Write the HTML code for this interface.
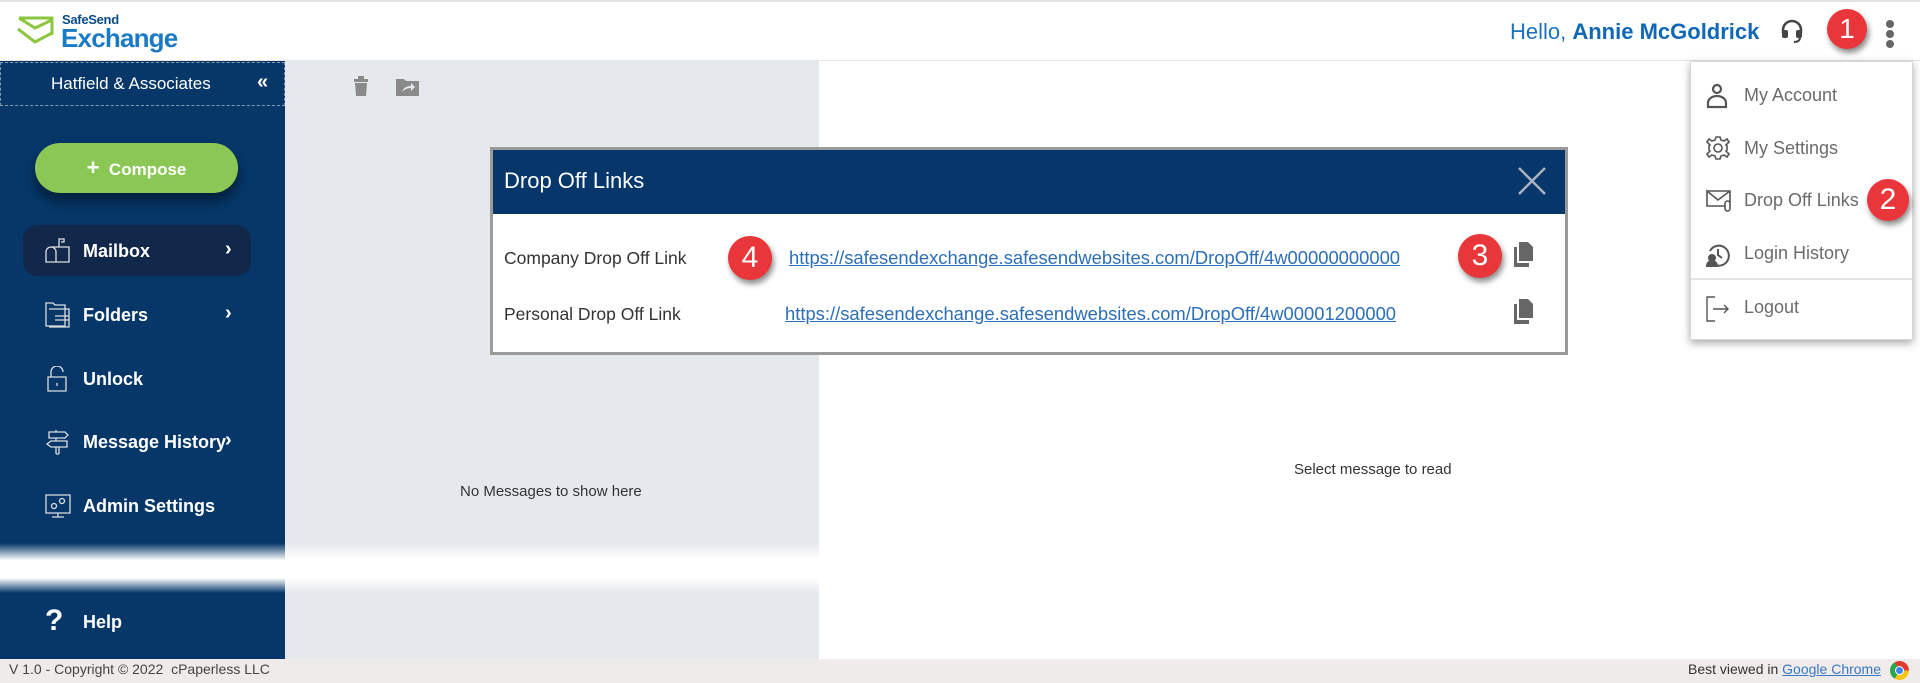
<!DOCTYPE html>
<html><head><meta charset="utf-8"><style>
*{box-sizing:border-box;margin:0;padding:0}
body{width:1920px;height:683px;position:relative;overflow:hidden;background:#fff;font-family:"Liberation Sans",sans-serif}
.a{position:absolute}
.side{left:0;top:61px;width:285px;height:598px;background:#063768}
.nav{position:absolute;left:83px;color:#fff;font-size:18px;font-weight:bold;line-height:22px}
.ic{position:absolute;left:45px}
.chev{position:absolute;left:225px;color:#fff;font-size:20px;font-weight:bold;line-height:20px}
.badge{position:absolute;width:44px;height:44px;border-radius:50%;background:#e8363b;color:#fff;font-size:30px;text-align:center;line-height:44px;box-shadow:2px 4px 6px rgba(0,0,0,.45)}
.dd{position:absolute;left:53px;color:#6b6b6b;font-size:18px}
.ddi{position:absolute;left:15px}
</style></head><body>
<div class="a" style="left:0;top:0;width:1920px;height:2px;background:#e3e3e3"></div>
<svg class="a" style="left:16px;top:15px" width="40" height="30" viewBox="0 0 40 30"><path d="M3 3 L36 3 L36 20 M3 3 L19 13 L36 5 M2 14 L19 27 L36 18" fill="none" stroke="#8cc63f" stroke-width="3"/></svg>
<div class="a" style="left:62px;top:12px;color:#0a4b86;font-size:13px;font-weight:bold;letter-spacing:-.3px">SafeSend</div>
<div class="a" style="left:61px;top:24px;color:#1a7ac4;font-size:26px;font-weight:bold;letter-spacing:-.8px;line-height:28px">Exchange</div>
<div class="a" style="left:0;top:60px;width:1920px;height:1px;background:#e6e6e6"></div>
<div class="a" style="left:1510px;top:19px;font-size:22px;color:#1a73c0">Hello, <b style="color:#0f67b5">Annie McGoldrick</b></div>
<svg class="a" style="left:1779px;top:19px" width="26" height="26" viewBox="0 0 26 26"><path d="M4 14 V11 a9 9 0 0 1 18 0 V14" fill="none" stroke="#444" stroke-width="2.5"/><rect x="3" y="11" width="6" height="8" rx="2" fill="#444"/><rect x="17" y="11" width="6" height="8" rx="2" fill="#444"/><path d="M21 18 q0 5 -6 5" fill="none" stroke="#444" stroke-width="2"/></svg>
<div class="badge" style="left:1827px;top:9px;width:40px;height:40px;line-height:40px;font-size:28px">1</div>
<div class="a" style="left:1886px;top:20px;width:8px;height:8px;border-radius:50%;background:#666"></div>
<div class="a" style="left:1886px;top:30px;width:8px;height:8px;border-radius:50%;background:#666"></div>
<div class="a" style="left:1886px;top:40px;width:8px;height:8px;border-radius:50%;background:#666"></div>
<div class="a side"></div>
<div class="a" style="left:0;top:62px;width:285px;height:44px;border:1px dashed #8899aa;color:#fff;font-size:17px;line-height:42px;padding-left:50px">Hatfield &amp; Associates<span style="position:absolute;left:256px;font-weight:bold;font-size:20px;top:-2px">«</span></div>
<div class="a" style="left:35px;top:143px;width:203px;height:50px;border-radius:25px;background:#8bc755;color:#fff;font-size:17px;font-weight:bold;text-align:center;line-height:50px;box-shadow:0 8px 12px rgba(0,0,0,.45)"><span style="font-size:22px">+</span>&nbsp; Compose</div>
<div class="a" style="left:23px;top:225px;width:228px;height:51px;border-radius:14px;background:#12284a"></div>
<svg class="ic" style="top:238px" width="26" height="26" viewBox="0 0 26 26" fill="none" stroke="#ddd" stroke-width="1.3"><path d="M1 24 V14 a5 5 0 0 1 10 0 V24 Z M6 9 H24 V24 H11 M14 9 V1 H19 V4 H16"/></svg>
<div class="nav" style="top:240px">Mailbox</div><div class="chev" style="top:239px">›</div>
<svg class="ic" style="top:302px" width="26" height="26" viewBox="0 0 26 26" fill="none" stroke="#ddd" stroke-width="1.3"><path d="M1 1 H8 L10 3 H20 V24 H1 Z M4 7 H24 V25 H4 M10 14 H24 M10 18 H24"/></svg>
<div class="nav" style="top:304px">Folders</div><div class="chev" style="top:303px">›</div>
<svg class="ic" style="top:366px" width="24" height="26" viewBox="0 0 24 26" fill="none" stroke="#ddd" stroke-width="1.3"><path d="M6 11 V6 a6 6 0 0 1 12 0 M3 11 H21 V25 H3 Z M12 17 V20"/></svg>
<div class="nav" style="top:368px">Unlock</div>
<svg class="ic" style="top:429px" width="26" height="26" viewBox="0 0 26 26" fill="none" stroke="#ddd" stroke-width="1.3"><path d="M4 3 H20 L23 6 L20 9 H4 Z M22 12 H6 L2 15 L6 18 H22 Z M11 1 V3 M11 9 V12 M11 18 V25 M14 18 V25 M11 25 H14"/></svg>
<div class="nav" style="top:431px">Message History</div><div class="chev" style="top:430px">›</div>
<svg class="ic" style="top:493px" width="26" height="26" viewBox="0 0 26 26" fill="none" stroke="#ddd" stroke-width="1.3"><path d="M1 2 H25 V20 H1 Z M13 20 V24 M7 24 H19"/><circle cx="9" cy="13" r="2.5"/><circle cx="17" cy="8" r="2.5"/></svg>
<div class="nav" style="top:495px">Admin Settings</div>
<div class="a" style="left:0;top:543px;width:819px;height:50px;background:linear-gradient(#063768 0%,#fff 35%,#fff 70%,#063768 100%)"></div>
<div class="a" style="left:285px;top:543px;width:534px;height:50px;background:linear-gradient(#e5e9ed 0%,#fff 35%,#fff 70%,#e5e9ed 100%)"></div>
<div class="a" style="left:45px;top:604px;color:#fff;font-size:30px;font-weight:bold">?</div>
<div class="nav" style="top:611px">Help</div>
<div class="a" style="left:285px;top:61px;width:534px;height:482px;background:#e5e9ed"></div>
<div class="a" style="left:285px;top:593px;width:534px;height:66px;background:#e5e9ed"></div>
<svg class="a" style="left:353px;top:76px" width="16" height="21" viewBox="0 0 16 21"><rect x="1" y="3" width="14" height="3" fill="#8a8a8a"/><rect x="5" y="0" width="6" height="3" fill="#8a8a8a"/><path d="M2 7 H14 L13 20 H3 Z" fill="#8a8a8a"/></svg>
<svg class="a" style="left:396px;top:78px" width="23" height="18" viewBox="0 0 23 18"><path d="M0 1 H8 L10 3 H23 V18 H0 Z" fill="#8a8a8a"/><path d="M6 14 q2 -6 9 -6 V5 l4 4 -4 4 V10 q-5 0 -9 4Z" fill="#e5e9ed"/></svg>
<div class="a" style="left:460px;top:483px;color:#333;font-size:15px">No Messages to show here</div>
<div class="a" style="left:1294px;top:461px;color:#333;font-size:15px">Select message to read</div>
<div class="a" style="left:0;top:659px;width:1920px;height:24px;background:#efebea"></div>
<div class="a" style="left:9px;top:661px;color:#444;font-size:14px">V 1.0 - Copyright © 2022 &nbsp;cPaperless LLC</div>
<div class="a" style="left:1688px;top:661px;color:#333;font-size:14px">Best viewed in <span style="color:#3a78c2;text-decoration:underline">Google Chrome</span></div>
<div class="a" style="left:1890px;top:661px;width:19px;height:19px;border-radius:50%;background:conic-gradient(from -30deg,#e23a2e 0 120deg,#f8c31b 120deg 240deg,#2da44e 240deg)"></div>
<div class="a" style="left:1895px;top:666px;width:9px;height:9px;border-radius:50%;background:#3f86f0;border:1.5px solid #fff"></div>
<div class="a" style="left:490px;top:147px;width:1078px;height:208px;border:3px solid #9a9a9a;background:#fff"></div>
<div class="a" style="left:493px;top:150px;width:1072px;height:64px;background:#06366a"></div>
<div class="a" style="left:504px;top:168px;color:#fff;font-size:22px">Drop Off Links</div>
<svg class="a" style="left:1518px;top:167px" width="28" height="28" viewBox="0 0 28 28"><path d="M1 1 L27 27 M27 1 L1 27" stroke="#a9b4c2" stroke-width="2.5"/></svg>
<div class="a" style="left:504px;top:248px;color:#333;font-size:17.5px">Company Drop Off Link</div>
<div class="a" style="left:789px;top:247px;color:#2c6fb8;font-size:18.4px;text-decoration:underline">https://safesendexchange.safesendwebsites.com/DropOff/4w00000000000</div>
<div class="a" style="left:504px;top:304px;color:#333;font-size:17.5px">Personal Drop Off Link</div>
<div class="a" style="left:785px;top:303px;color:#2c6fb8;font-size:18.4px;text-decoration:underline">https://safesendexchange.safesendwebsites.com/DropOff/4w00001200000</div>
<svg class="a" style="left:1514px;top:242px" width="20" height="25" viewBox="0 0 20 25"><path d="M0 5 H3 V21 H15 V25 H0 Z" fill="#666"/><path d="M5 0 H14 L19 5 V19 H5 Z" fill="#666"/></svg>
<svg class="a" style="left:1514px;top:299px" width="20" height="25" viewBox="0 0 20 25"><path d="M0 5 H3 V21 H15 V25 H0 Z" fill="#666"/><path d="M5 0 H14 L19 5 V19 H5 Z" fill="#666"/></svg>
<div class="badge" style="left:728px;top:236px">4</div>
<div class="badge" style="left:1458px;top:234px">3</div>
<div class="a" style="left:1690px;top:61px;width:223px;height:279px;background:#fff;border:1px solid #d8d8d8;box-shadow:0 3px 8px rgba(0,0,0,.35)">
<svg class="ddi" style="top:21px" width="22" height="26" viewBox="0 0 22 26" fill="none" stroke="#555" stroke-width="2.2"><circle cx="11" cy="6" r="4"/><path d="M2 24 V20 a9 7 0 0 1 18 0 V24 Z"/></svg>
<div class="dd" style="top:23px">My Account</div>
<svg class="ddi" style="top:74px" width="24" height="24" viewBox="0 0 24 24" fill="none" stroke="#555" stroke-width="1.6"><circle cx="12" cy="12" r="4"/><path d="M10 1 H14 L15 4 L18 5 L21 3 L23 6 L20 9 L21 10 V14 L20 15 L23 18 L21 21 L18 19 L15 20 L14 23 H10 L9 20 L6 19 L3 21 L1 18 L4 15 L3 14 V10 L4 9 L1 6 L3 3 L6 5 L9 4 Z"/></svg>
<div class="dd" style="top:76px">My Settings</div>
<svg class="ddi" style="top:127px" width="26" height="24" viewBox="0 0 26 24" fill="none" stroke="#555" stroke-width="1.6"><path d="M1 2 H24 V14 M19 17 H1 V2 L12 11 L24 2"/><rect x="19" y="12" width="5" height="10" rx="2.5"/></svg>
<div class="dd" style="top:128px">Drop Off Links</div>
<svg class="ddi" style="top:181px" width="24" height="24" viewBox="0 0 24 24" fill="none" stroke="#555" stroke-width="2"><path d="M4 8 a10 10 0 1 1 2 12"/><path d="M12 6 V12 L16 15"/><path d="M1 23 a5 5 0 0 1 10 0 Z" fill="#555"/><circle cx="6" cy="15" r="3" fill="#555"/></svg>
<div class="dd" style="top:181px">Login History</div>
<div class="a" style="left:0;top:216px;width:221px;height:2px;background:#e3e3e3"></div>
<svg class="ddi" style="top:234px" width="24" height="26" viewBox="0 0 24 26" fill="none" stroke="#555" stroke-width="1.4"><path d="M9 1 H1 V25 H9 M7 13 H22 M18 9 L22 13 L18 17"/></svg>
<div class="dd" style="top:235px">Logout</div>
</div>
<div class="badge" style="left:1867px;top:179px;width:42px;height:42px;line-height:42px">2</div>
</body></html>
